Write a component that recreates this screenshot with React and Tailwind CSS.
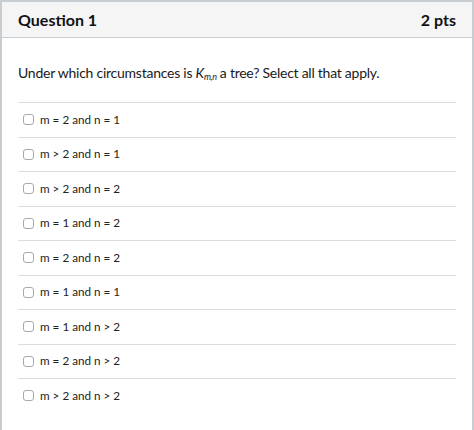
import React from 'react';

const options = [
  'm = 2 and n = 1',
  'm > 2 and n = 1',
  'm > 2 and n = 2',
  'm = 1 and n = 2',
  'm = 2 and n = 2',
  'm = 1 and n = 1',
  'm = 1 and n > 2',
  'm = 2 and n > 2',
  'm > 2 and n > 2',
];

function Option({ label }) {
  return (
    <div className="flex items-center h-[34.5px] border-t border-[#dcdcdc] pl-[5px]">
      <span className="w-[11px] h-[11px] border border-[#a8a8a8] rounded-[3px] bg-white" />
      <span className="ml-[6px] text-[11.7px] text-[#222]">{label}</span>
    </div>
  );
}

export default function App() {
  return (
    <div
      className="w-[474px] h-[430px] overflow-hidden bg-white border-2 border-b-0 border-[#c7cdd1]"
      style={{ fontFamily: 'Lato, "Noto Sans", sans-serif' }}
    >
      {/* Header */}
      <div className="flex items-center justify-between h-[36px] px-4 bg-[#f5f5f5] border-b border-[#c7cdd1]">
        <h2 className="text-[16px] font-bold text-[#111]">Question 1</h2>
        <span className="text-[16px] font-bold text-[#111]">2 pts</span>
      </div>

      {/* Content */}
      <div className="px-4 pt-[25px]">
        <p className="text-[14px] leading-[20px] text-[#1a1a1a] mb-[19px] tracking-[-0.25px]">
          Under which circumstances is{' '}
          <i>K</i>
          <sub className="italic text-[9px] tracking-tighter">m,n</sub> a tree? Select all that apply.
        </p>
        <div>
          {options.map((o, i) => (
            <Option key={i} label={o} />
          ))}
        </div>
      </div>
    </div>
  );
}
